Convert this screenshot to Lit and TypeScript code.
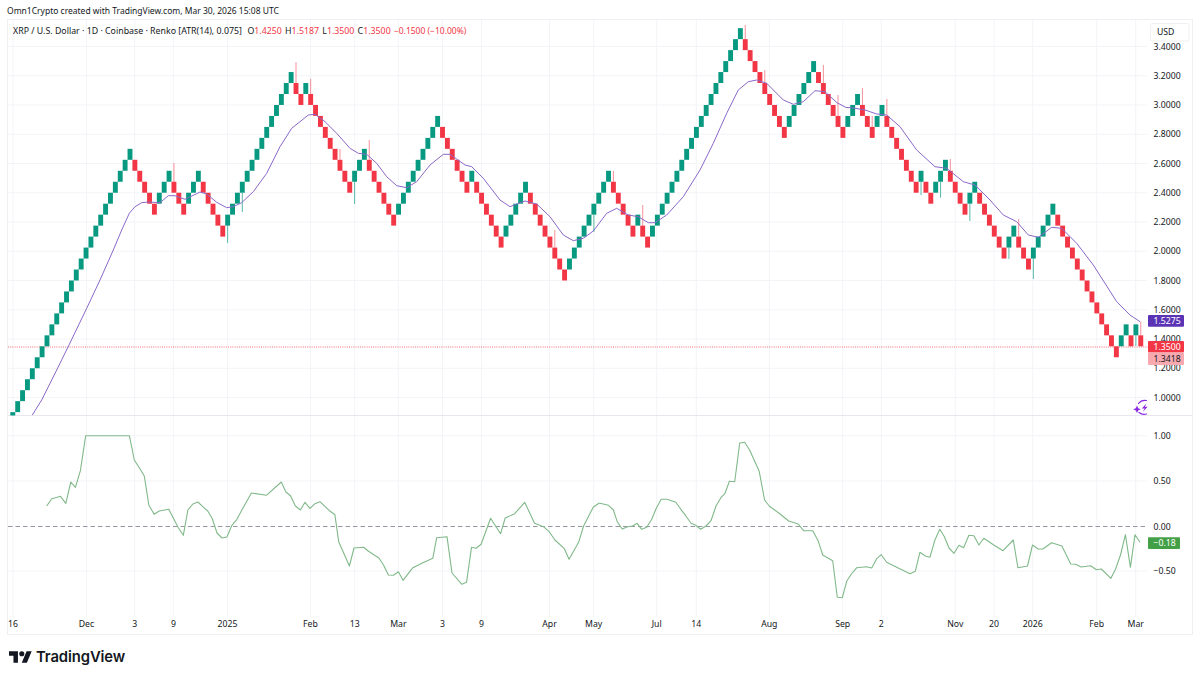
import { LitElement, html, svg, css } from "lit";
import { customElement } from "lit/decorators.js";

// ---- Renko bricks: alternating runs, starting green from level -7 ----
const RUNS = [25,5,3,3,3,5,14,2,1,9,3,6,9,6,1,6,5,8,9,5,1,2,19,9,6,6,3,3,2,7,1,2,3,4,2,6,2,3,5,13,2,1,1,1];
const X0 = 12.8, DX = 4.883, W = 4.9;
const Y1 = 346.3, LV = 10.97;
const yOfLevel = (n: number) => Y1 - n * LV;

interface Brick { x: number; top: number; bottom: number; up: boolean }
const bricks: Brick[] = [];
{
  let level = -7; // bottom of next green brick
  let i = 0;
  RUNS.forEach((count, r) => {
    const up = r % 2 === 0;
    for (let k = 0; k < count; k++) {
      const bottom = up ? level + k : level - 1 - k;
      bricks.push({ x: X0 + DX * i, top: yOfLevel(bottom + 1), bottom: yOfLevel(bottom), up });
      i++;
    }
    level = up ? level + count - 1 : level - count + 1;
  });
}

// [x, end y] wicks, snapped to the nearest brick
const WICKS: [number, number][] = [
  [173.7,163],[227.7,243],[242,212],[295.7,62],[310.3,79],[339.7,149],[354.3,204],[369,140],
  [554.7,230],[593.7,232],[613.3,171],[642.7,205],[745,25],[764.7,70],[822.7,65],[837.5,95],
  [862.3,88],[871.7,116],[886.7,99],[921,195],[940.3,197.7],[950.3,159],[969.7,221],
  [1008.7,259],[1018.3,219],[1033,279],[1135.7,346],[1140.7,321.7],
];

const MA = [
  [32.3,415],[41.7,400],[56.7,370],[69,345],[86.7,308.3],[100,280],[113.3,250],[121.7,230],[129.3,213.3],[135,206.7],[141.7,202.7],
  [148.3,202],[160,202.7],[168.3,195.7],[175,195.7],[185,199.3],[200,192],[206.7,194],[216.7,202.3],[226.7,207.7],[233.3,206.7],
  [241.7,202.7],[253.3,191.7],[266.7,173.3],[280,146.7],[291.7,128.3],[300,121.7],[308.3,115],[315,114.3],[325,121.7],[336.7,133.3],
  [350,148.3],[358.3,153.3],[366.7,154.3],[376.7,163.3],[386.7,176.7],[396.7,185.7],[406.7,187.7],[416.7,181.7],[430,165],[443.3,154.3],
  [450,154.3],[465,165],[471.7,166.7],[483.3,178.3],[500,200],[510,206.7],[516.7,204],[525,201],[536.7,204],[550,216.7],[563.3,235],
  [573.3,240.7],[583.3,238.3],[593.3,231],[606.7,213.3],[616.7,208.3],[628.3,215],[638.3,216.7],[648.3,222.7],[655,222.7],[666.7,215],
  [683.3,196.7],[700,170],[713.3,143.3],[726.7,113.3],[738.3,90],[748.3,81.7],[756.7,80],[766.7,83.3],[783.3,100],[793.3,104.3],
  [803.3,101.7],[815,90.7],[825,91.7],[836.7,102.5],[846,107.5],[851.7,107.7],[865,110],[876.7,114],[886.7,115],[900,126.7],
  [916.7,150],[935,166.7],[946.7,168.3],[963.3,181.7],[975,185],[990,200],[1003.3,215],[1016.7,221.7],[1028.3,235],[1038.3,237.3],
  [1051.7,227.3],[1061.7,228.3],[1076.7,243.3],[1093.3,265],[1116.7,301.7],[1130,315],[1140,321.7],
];

const OSC_A = [122,258,135,236,145,233,158,229,172,250,185,186,197,202,210,152,224,47,338,47,351,120,364,143,377,168,389,256,403,283,416,273,441,268,466,323,479,346,491,270,504,252,517,246,530,260,543,273,555,297,567,339,580,354,593,351,606,316,619,298,632,270,657,219,696,226,735,186,747,216,759,227,772,258,785,270,797,247,810,265,823,251,836,245,861,272,875,284,885,365,913,438,925,384,950,382,963,394,990,414,1002,435,1015,465,1028,466,1041,455,1053,481,1079,443,1105,428,1131,415,1141,353,1168,350,1181,459,1207,493,1219,487,1232,382,1244,385,1257,373,1282,295,1308,341,1320,294,1345,281,1371,247,1397,310,1420,320,1435,335,1450,360,1474,385,1487,418,1512,367,1525,318,1550,262,1565,250];
const OSC_B = [0,250,22,256,35,270,45,305,58,327,72,320,85,318,97,310,109,328,122,322,135,298,147,265,160,238,175,238,198,247,211,268,224,287,238,310,250,316,263,328,277,318,290,302,303,258,316,233,326,221,338,184,352,185,365,69,378,67,391,90,416,154,430,240,442,258,468,280,493,303,518,312,532,332,556,332,570,362,582,405,608,422,620,532,633,533,645,483,657,462,671,443,697,440,710,444,723,416,735,404,749,427,762,434,810,461,824,454,836,397,850,408,862,412,875,360,888,328,900,350,912,384,925,400,938,376,950,383,964,346,977,347,990,375,1003,355,1028,374,1053,392,1080,360,1092,443,1117,438,1130,375,1145,387,1157,387,1180,368,1207,378,1230,432,1243,433,1257,441,1282,437,1297,449,1310,447,1335,475,1347,448,1360,405,1373,344,1386,442,1398,344,1411,367];

const oscPts: string[] = [];
for (let i = 0; i < OSC_A.length; i += 2) oscPts.push(`${(OSC_A[i] / 2.613).toFixed(1)},${(420 + OSC_A[i + 1] / 3).toFixed(1)}`);
for (let i = 0; i < OSC_B.length; i += 2) oscPts.push(`${(600 + OSC_B[i] / 2.613).toFixed(1)},${(420 + OSC_B[i + 1] / 3).toFixed(1)}`);

const VGRID: [number, string][] = [
  [13,"16"],[86.5,"Dec"],[134.7,"3"],[173.4,"9"],[227.5,"2025"],[310.5,"Feb"],[354.7,"13"],[398.3,"Mar"],[442.5,"3"],[481.5,"9"],
  [549.5,"Apr"],[593.7,"May"],[656.7,"Jul"],[696.3,"14"],[769.3,"Aug"],[842.7,"Sep"],[881.3,"2"],[955.3,"Nov"],[994,"20"],[1032.7,"2026"],[1096.7,"Feb"],[1135.7,"Mar"],
];
const PRICES = [3.4,3.2,3.0,2.8,2.6,2.4,2.2,2.0,1.8,1.6,1.4,1.2,1.0];
const yOfPrice = (p: number) => 397.5 - (p - 1) * 146.25;
const OSC_TICKS: [number, string][] = [[435.7,"1.00"],[481,"0.50"],[526.5,"0.00"],[571,"\u22120.50"]];

const TAGS = [
  { y: 315, h: 11.7, w: 36, fill: "tag-purple", text: "1.5275", cls: "tag-text" },
  { y: 341, h: 11.4, w: 36, fill: "tag-red", text: "1.3500", cls: "tag-text" },
  { y: 352.4, h: 12.6, w: 36, fill: "tag-pink", text: "1.3418", cls: "tag-text-dark" },
  { y: 537.3, h: 11.7, w: 32, fill: "tag-green", text: "\u22120.18", cls: "tag-text" },
];

@customElement("app-root")
export class AppRoot extends LitElement {
  static styles = css`
    :host { display: block; width: 1200px; height: 679px; background: #fff; overflow: hidden; }
    .page { display: flex; flex-direction: column; width: 1200px; height: 679px; background: #fff; color: #131722;
      font-family: "Noto Sans", "Open Sans", sans-serif; }
    .title { height: 19px; padding-left: 7px; font-size: 8.5px; line-height: 22px; white-space: nowrap; }
    .chart { position: relative; width: 1184px; height: 614px; margin-left: 7px; border: 1px solid #eff0f3; flex: none; }
    .chart svg { display: block; width: 1184px; height: 614px; }
    .legend { position: absolute; left: 5px; top: 4px; display: flex; font-size: 8.8px; line-height: 14px; white-space: nowrap; }
    .legend .sym { margin-right: 5.5px; }
    .legend .ohlc { margin-right: 3.2px; }
    .legend b { font-weight: 400; color: #f23645; }
    .legend .chg { color: #f23645; font-size: 8.5px; }
    .grid { stroke: #f3f4f8; stroke-width: 1; fill: none; }
    .sep { stroke: #e6e8ee; stroke-width: 1; }
    .up { fill: #089981; }
    .down { fill: #f23645; }
    .wick-up { stroke: #089981; stroke-width: 0.9; opacity: 0.75; }
    .wick-down { stroke: #f23645; stroke-width: 0.9; opacity: 0.6; }
    .ma { fill: none; stroke: #8a68c8; stroke-width: 1; stroke-linejoin: round; }
    .osc { fill: none; stroke: #81b98a; stroke-width: 1.1; stroke-linejoin: round; }
    .zero { stroke: #787b86; stroke-width: 0.9; stroke-dasharray: 4.5 3; opacity: 0.85; }
    .last { stroke: #f23645; stroke-width: 0.9; stroke-dasharray: 1 1.2; opacity: 0.8; }
    .axis { fill: #131722; font-size: 8.7px; font-family: "Noto Sans", sans-serif; }
    .mid { text-anchor: middle; }
    .tag-purple { fill: #5b34b5; }
    .tag-red { fill: #f23645; }
    .tag-pink { fill: #f7a9af; }
    .tag-green { fill: #43a047; }
    .tag-text { fill: #fff; font-size: 8.7px; font-family: "Noto Sans", sans-serif; }
    .tag-text-dark { fill: #131722; font-size: 8.7px; font-family: "Noto Sans", sans-serif; }
    .usd { fill: #fff; stroke: #eff0f3; stroke-width: 1; }
    .bolt-line { fill: none; stroke: #8a2be2; stroke-width: 1.2; stroke-linecap: round; }
    .bolt-fill { fill: #8a2be2; }
    .footer { display: flex; align-items: center; gap: 4px; padding: 15px 0 0 9px; }
    .footer svg { width: 23px; height: 12px; display: block; fill: #131722; }
    .brand { font-family: Inter, "Noto Sans", sans-serif; font-weight: 600; font-size: 14.8px; line-height: 14px; color: #131722; letter-spacing: -0.1px; }
  `;

  private nearest(x: number) {
    return bricks[Math.max(0, Math.min(bricks.length - 1, Math.round((x - X0) / DX)))];
  }

  render() {
    return html`
      <div class="page">
        <div class="title">Omn1Crypto created with TradingView.com, Mar 30, 2026 15:08 UTC</div>
        <div class="chart">
          <svg viewBox="8 20 1184 614" xmlns="http://www.w3.org/2000/svg">
            <defs>
              <clipPath id="pane"><rect x="8" y="20" width="1140" height="395.5"></rect></clipPath>
            </defs>
            ${PRICES.map((p) => svg`<line class="grid" x1="8" x2="1147" y1=${yOfPrice(p)} y2=${yOfPrice(p)}></line>`)}
            ${[435.7, 481, 571].map((y) => svg`<line class="grid" x1="8" x2="1147" y1=${y} y2=${y}></line>`)}
            ${VGRID.map(([x]) => svg`
              <line class="grid" x1=${x} x2=${x} y1="20" y2="415"></line>
              <line class="grid" x1=${x} x2=${x} y1="416" y2="617"></line>`)}
            <line class="sep" x1="8" x2="1192" y1="415.5" y2="415.5"></line>

            <line class="last" x1="8" x2="1148" y1="347" y2="347"></line>

            <g clip-path="url(#pane)">
              ${WICKS.map(([x, y]) => {
                const b = this.nearest(x);
                const upper = y < b.top;
                return svg`<line class=${b.up ? "wick-up" : "wick-down"} x1=${b.x} x2=${b.x} y1=${y} y2=${upper ? b.top : b.bottom}></line>`;
              })}
              ${bricks.map((b) => svg`<rect class=${b.up ? "up" : "down"} x=${b.x - W / 2} y=${b.top} width=${W} height=${b.bottom - b.top}></rect>`)}
              <polyline class="ma" points=${MA.map((p) => p.join(",")).join(" ")}></polyline>
            </g>

            <line class="zero" x1="8" x2="1147" y1="526.5" y2="526.5"></line>
            <polyline class="osc" points=${oscPts.join(" ")}></polyline>

            ${PRICES.map((p) => svg`<text class="axis" x="1153.5" y=${yOfPrice(p) + 3.2}>${p.toFixed(4)}</text>`)}
            ${OSC_TICKS.map(([y, t]) => svg`<text class="axis" x="1153.5" y=${y + 3.2}>${t}</text>`)}
            ${VGRID.map(([x, t]) => svg`<text class="axis mid" x=${x} y="627">${t}</text>`)}

            <rect class="usd" x="1150.5" y="23.5" rx="2" width="38.5" height="17.5"></rect>
            <text class="axis" x="1157" y="35">USD</text>

            ${TAGS.map((t) => svg`
              <rect class=${t.fill} x="1148" y=${t.y} width=${t.w} height=${t.h} rx="1"></rect>
              <text class=${t.cls} x="1153.5" y=${t.y + t.h / 2 + 3.2}>${t.text}</text>`)}

            <path class="bolt-line" d="M1146.5 400.5 A8 8 0 0 0 1138.5 403.5"></path>
            <path class="bolt-line" d="M1139 412.5 A8 8 0 0 0 1146.5 414"></path>
            <path class="bolt-fill" d="M1137 405.5 L1138.2 408.2 L1140.8 409.3 L1138.2 410.4 L1137 413 L1135.8 410.4 L1133.2 409.3 L1135.8 408.2 Z"></path>
            <path class="bolt-fill" d="M1146.6 403.2 L1141.8 408.4 L1144.6 408.4 L1142.8 412 L1147.6 406.8 L1144.8 406.8 Z"></path>
          </svg>
          <div class="legend">
            <span class="sym">XRP / U.S. Dollar · 1D · Coinbase · Renko [ATR(14), 0.075]</span>
            <span class="ohlc">O<b>1.4250</b></span>
            <span class="ohlc">H<b>1.5187</b></span>
            <span class="ohlc">L<b>1.3500</b></span>
            <span class="ohlc">C<b>1.3500</b></span>
            <span class="chg">−0.1500 (−10.00%)</span>
          </div>
        </div>
        <div class="footer">
          <svg viewBox="0 0 36 18" aria-hidden="true">
            <path d="M14 18H7V7H0V0h14v18zM28 18h-8L27.5 0h8L28 18z"></path>
            <circle cx="20" cy="4" r="4"></circle>
          </svg>
          <span class="brand">TradingView</span>
        </div>
      </div>
    `;
  }
}
